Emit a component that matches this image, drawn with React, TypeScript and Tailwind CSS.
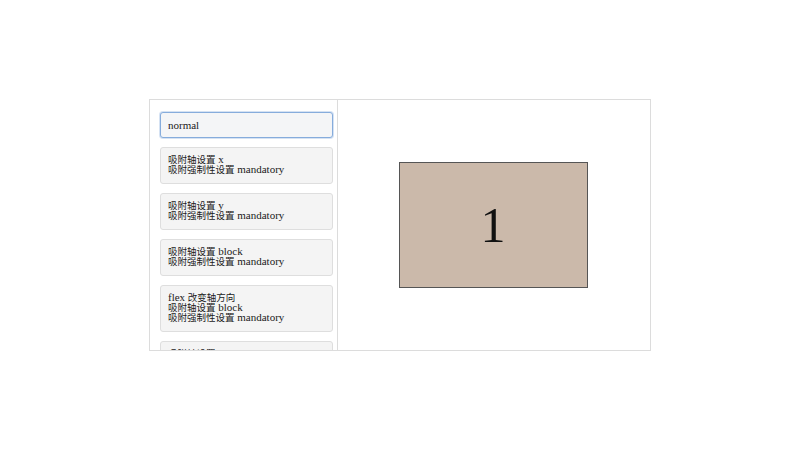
import React from 'react';

const items: string[][] = [
  ['吸附轴设置 x', '吸附强制性设置 mandatory'],
  ['吸附轴设置 y', '吸附强制性设置 mandatory'],
  ['吸附轴设置 block', '吸附强制性设置 mandatory'],
  ['flex 改变轴方向', '吸附轴设置 block', '吸附强制性设置 mandatory'],
  ['吸附轴设置 x', '吸附强制性设置 proximity'],
  ['吸附轴设置 y', '吸附强制性设置 proximity'],
];

// CJK runs render a little smaller than the serif latin text
const renderLine = (line: string) =>
  line.split(/([\u4e00-\u9fff]+)/).map((part, i) =>
    /[\u4e00-\u9fff]/.test(part) ? (
      <span key={i} className="text-[9.5px] leading-[10px]">{part}</span>
    ) : (
      <span key={i} className="leading-[10px]">{part}</span>
    )
  );

export default function App() {
  return (
    <div
      className="flex h-[450px] w-[800px] items-center justify-center bg-white text-[#1a1a1a]"
      style={{ fontFamily: '"Liberation Serif", "Noto Sans CJK SC", serif' }}
    >
      <div className="flex h-[252px] w-[502px] border border-[#dcdcdc]">
        <div className="flex w-[188px] shrink-0 flex-col gap-[9px] overflow-hidden border-r border-[#dcdcdc] pl-[10px] pr-[4px] pt-[12px]">
          <input
            defaultValue="normal"
            className="h-[26px] w-[173px] shrink-0 rounded-[3px] border border-[#86acdc] bg-[#f4f5f7] px-[7px] text-[11px] text-[#1a1a1a] outline-none shadow-[0_0_0_1px_rgba(134,172,220,0.35)]"
            style={{ fontFamily: '"Liberation Serif", "Noto Sans CJK SC", serif' }}
          />
          {items.map((lines, idx) => (
            <div
              key={idx}
              className="w-[173px] shrink-0 rounded-[3px] border border-[#dedede] bg-[#f4f4f4] pb-[9px] pl-[7px] pt-[6px] text-[11px] leading-[10px]"
            >
              {lines.map((l, j) => (
                <div key={j} className="h-[10px] whitespace-nowrap leading-[10px]">{renderLine(l)}</div>
              ))}
            </div>
          ))}
        </div>
        <div className="flex flex-1 items-center justify-center pr-[2px]">
          <div className="flex h-[126px] w-[189px] items-center justify-center border border-[#555] bg-[#cbb9aa] text-[50px] leading-none text-[#111]">
            1
          </div>
        </div>
      </div>
    </div>
  );
}
